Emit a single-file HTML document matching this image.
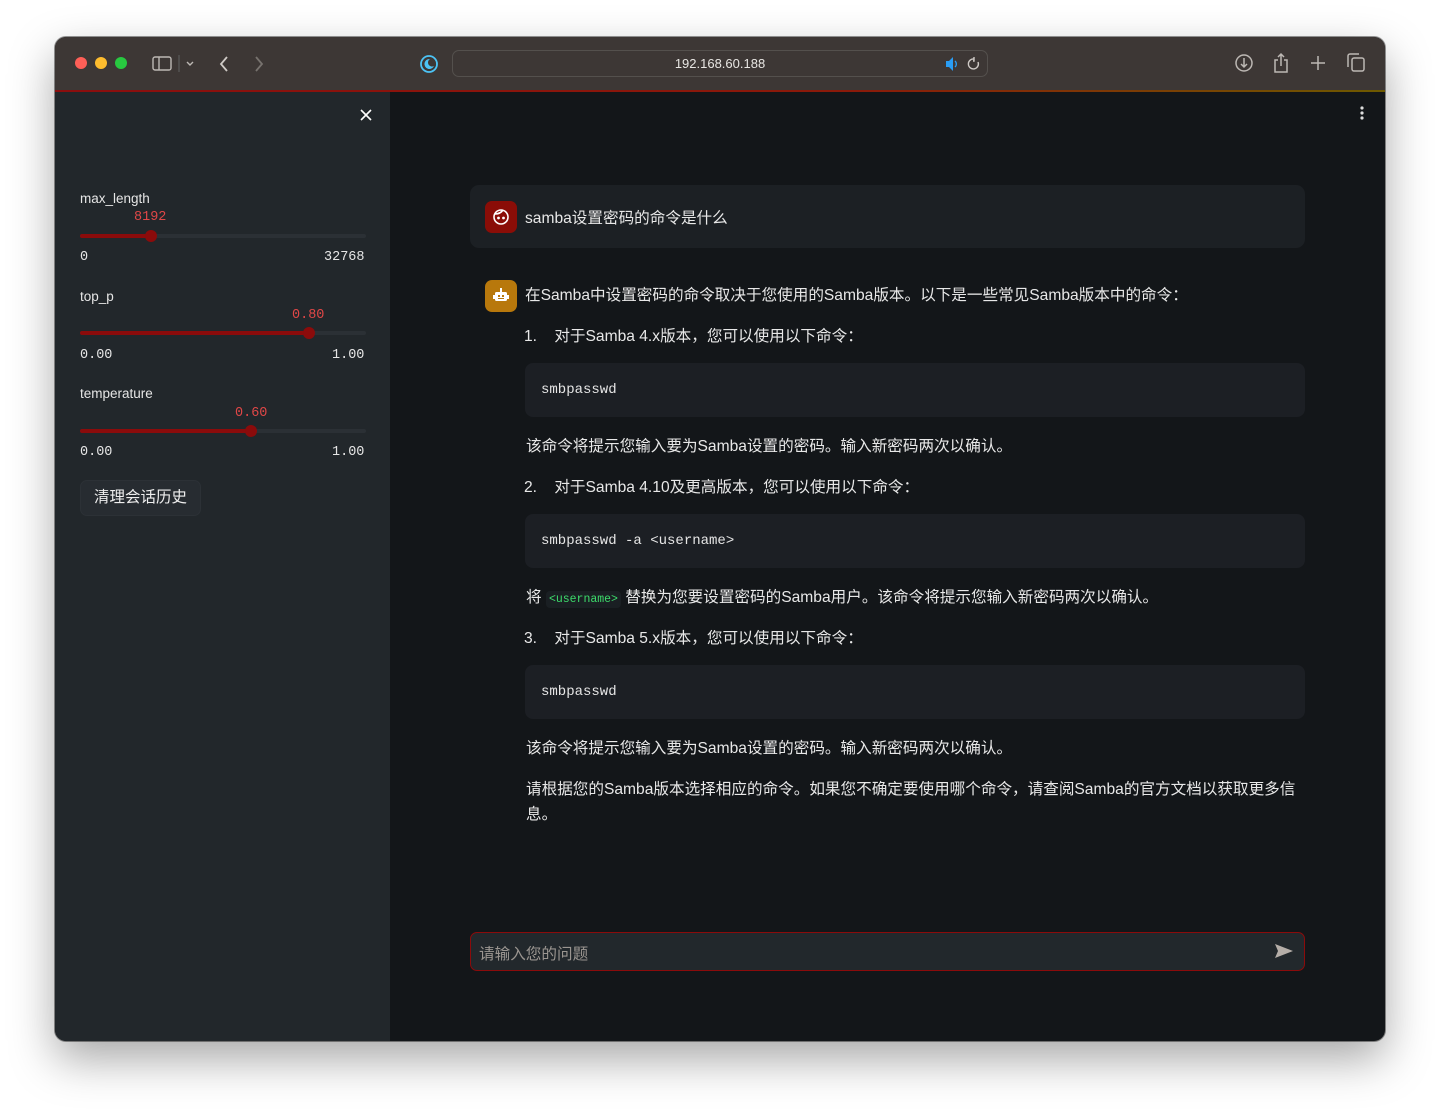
<!DOCTYPE html>
<html><head><meta charset="utf-8">
<style>
*{box-sizing:border-box;margin:0;padding:0}
body{width:1440px;height:1115px;background:#fff;font-family:"Liberation Sans","Noto Sans CJK SC",sans-serif;position:relative;overflow:hidden}
.win{position:absolute;left:55px;top:37px;width:1330px;height:1004px;border-radius:11px;overflow:hidden;background:#131619;box-shadow:0 18px 45px rgba(0,0,0,.35),0 0 0 1px rgba(0,0,0,.4)}
.bar{position:absolute;left:0;top:0;width:100%;height:53px;background:#3d3735}
.line{position:absolute;left:0;top:53px;width:100%;height:2px;background:linear-gradient(90deg,#8b0e0e,#8b1a0a 60%,#6e5a00)}
.dot{position:absolute;top:20px;width:12px;height:12px;border-radius:50%}
.url{position:absolute;left:397px;top:13px;width:536px;height:27px;border:1px solid #54504d;border-radius:7px;color:#e8e6e3;font-size:13px;text-align:center;line-height:25px}
.side{position:absolute;left:0;top:55px;width:335px;height:949px;background:#22272b}
.lbl{position:absolute;left:25px;color:#e6e6e6;font-size:13.5px}
.mono{font-family:"Liberation Mono","DejaVu Sans Mono",monospace}
.val{position:absolute;color:#e04747;font-size:13.5px}
.track{position:absolute;left:25px;width:286px;height:4px;border-radius:2px;background:#2b3035}
.fill{position:absolute;left:0;top:0;height:4px;border-radius:2px;background:#8b0b0b}
.knob{position:absolute;top:-4px;width:12px;height:12px;border-radius:50%;background:#8b0b0b;margin-left:-6px}
.mm{position:absolute;color:#e6e6e6;font-size:13.5px}
.btn{position:absolute;left:25px;top:388px;width:121px;height:36px;border-radius:7px;background:#272c31;border:1px solid #2c3136;color:#eee;font-size:15.5px;text-align:center;line-height:34px}
.main{color:#e8e8e8;font-size:15.6px}
.p{position:absolute;left:471px;white-space:nowrap}
.code{position:absolute;left:470px;width:780px;height:54px;background:#1c1f24;border-radius:8px;font-family:"Liberation Mono","DejaVu Sans Mono",monospace;font-size:14px;color:#e6e6e6;padding-left:16px;line-height:54px}
.av{position:absolute;left:430px;width:32px;height:32px;border-radius:7px}
</style></head><body>
<div class="win">
 <div class="bar">
  <div class="dot" style="left:20px;background:#fe5f57"></div>
  <div class="dot" style="left:40px;background:#febc2e"></div>
  <div class="dot" style="left:60px;background:#28c840"></div>
  <svg style="position:absolute;left:97px;top:18px" width="60" height="18" viewBox="0 0 60 18" fill="none" stroke="#bdb8b4" stroke-width="1.4"><rect x="1" y="2" width="18" height="13" rx="2"/><line x1="7" y1="2" x2="7" y2="15"/><line x1="27" y1="0" x2="27" y2="17" stroke="#555"/><path d="M35 7l3 3 3-3"/></svg>
  <svg style="position:absolute;left:162px;top:17px" width="50" height="20" viewBox="0 0 50 20" fill="none" stroke-width="1.8"><path d="M10 3l-6 7 6 7" stroke="#cfcac6"/><path d="M39 3l6 7-6 7" stroke="#77726e"/></svg>
  <svg style="position:absolute;left:364px;top:17px" width="20" height="20" viewBox="0 0 20 20" fill="none"><circle cx="10" cy="10" r="8" stroke="#4cc3f5" stroke-width="1.8"/><path d="M11 5a5 5 0 1 0 4 7a4 4 0 0 1-4-7z" fill="#4cc3f5"/></svg>
  <div class="url">192.168.60.188</div>
  <svg style="position:absolute;left:890px;top:19px" width="36" height="16" viewBox="0 0 36 16"><path d="M1 5h3l4-4v14l-4-4H1z" fill="#2a9df4"/><path d="M10 5a4 4 0 0 1 0 6" stroke="#2a9df4" fill="none" stroke-width="1.3"/><path d="M29 3a5 5 0 1 0 4 3" stroke="#cfcac6" fill="none" stroke-width="1.4"/><path d="M29 1v4h-1" stroke="#cfcac6" fill="none" stroke-width="1.4"/></svg>
  <svg style="position:absolute;left:1178px;top:15px" width="140" height="24" viewBox="0 0 140 24" fill="none" stroke="#bdb8b4" stroke-width="1.5"><circle cx="11" cy="11" r="8"/><path d="M11 6v9M8 12l3 3 3-3"/><path d="M45 8h-3v12h12V8h-3M48 14V2M45 5l3-3 3 3"/><path d="M85 4v14M78 11h14"/><rect x="119" y="6" width="12" height="13" rx="2"/><path d="M115 15V4a2 2 0 0 1 2-2h9"/></svg>
 </div>
 <div class="line"></div>
 <div class="side">
  <svg style="position:absolute;left:305px;top:17px" width="12" height="12" viewBox="0 0 12 12" stroke="#fff" stroke-width="1.6"><path d="M1 1l10 10M11 1L1 11"/></svg>
  <div class="lbl" style="top:99px">max_length</div>
  <div class="val mono" style="left:79px;top:118px">8192</div>
  <div class="track" style="top:142px"><div class="fill" style="width:71px"></div><div class="knob" style="left:71px"></div></div>
  <div class="mm mono" style="left:25px;top:158px">0</div>
  <div class="mm mono" style="left:269px;top:158px">32768</div>

  <div class="lbl" style="top:197px">top_p</div>
  <div class="val mono" style="left:237px;top:216px">0.80</div>
  <div class="track" style="top:239px"><div class="fill" style="width:229px"></div><div class="knob" style="left:229px"></div></div>
  <div class="mm mono" style="left:25px;top:256px">0.00</div>
  <div class="mm mono" style="left:277px;top:256px">1.00</div>

  <div class="lbl" style="top:294px">temperature</div>
  <div class="val mono" style="left:180px;top:314px">0.60</div>
  <div class="track" style="top:337px"><div class="fill" style="width:171px"></div><div class="knob" style="left:171px"></div></div>
  <div class="mm mono" style="left:25px;top:353px">0.00</div>
  <div class="mm mono" style="left:277px;top:353px">1.00</div>
  <div class="btn">清理会话历史</div>
 </div>
 <svg style="position:absolute;left:1304px;top:68px" width="6" height="16"><circle cx="3" cy="3" r="1.6" fill="#ddd"/><circle cx="3" cy="8" r="1.6" fill="#ddd"/><circle cx="3" cy="13" r="1.6" fill="#ddd"/></svg>
 <div class="main">
  <div style="position:absolute;left:415px;top:148px;width:835px;height:63px;background:#1c2024;border-radius:9px"></div>
  <div class="av" style="top:164px;background:#8a0d07"><svg width="32" height="32" viewBox="0 0 32 32" fill="none" stroke="#fff" stroke-width="1.6"><circle cx="16" cy="16" r="7"/><path d="M10 13c3 0 6-1 8-4"/><circle cx="13.5" cy="17" r=".6" fill="#fff"/><circle cx="18.5" cy="17" r=".6" fill="#fff"/></svg></div>
  <div class="p" style="left:470px;top:169px">samba设置密码的命令是什么</div>
  <div class="av" style="top:243px;background:#b8780c"><svg width="32" height="32" viewBox="0 0 32 32" fill="#fff"><rect x="10" y="12" width="12" height="9" rx="1.5"/><rect x="15" y="8" width="2" height="4"/><rect x="8" y="15" width="2" height="4"/><rect x="22" y="15" width="2" height="4"/><rect x="13" y="15" width="2" height="2" fill="#b8780c"/><rect x="17" y="15" width="2" height="2" fill="#b8780c"/><rect x="13" y="18" width="6" height="1" fill="#b8780c"/></svg></div>
  <div class="p" style="left:470px;top:246px">在Samba中设置密码的命令取决于您使用的Samba版本。以下是一些常见Samba版本中的命令：</div>
  <div class="p" style="left:469px;top:287px">1.&nbsp;&nbsp;&nbsp;&nbsp;对于Samba 4.x版本，您可以使用以下命令：</div>
  <div class="code" style="top:326px">smbpasswd</div>
  <div class="p" style="top:397px">该命令将提示您输入要为Samba设置的密码。输入新密码两次以确认。</div>
  <div class="p" style="left:469px;top:438px">2.&nbsp;&nbsp;&nbsp;&nbsp;对于Samba 4.10及更高版本，您可以使用以下命令：</div>
  <div class="code" style="top:477px">smbpasswd -a &lt;username&gt;</div>
  <div class="p" style="top:548px">将 <span style="font-family:'Liberation Mono',monospace;font-size:11.5px;color:#3ddc6b;background:#1a1f23;padding:2px 3px;border-radius:4px">&lt;username&gt;</span> 替换为您要设置密码的Samba用户。该命令将提示您输入新密码两次以确认。</div>
  <div class="p" style="left:469px;top:589px">3.&nbsp;&nbsp;&nbsp;&nbsp;对于Samba 5.x版本，您可以使用以下命令：</div>
  <div class="code" style="top:628px">smbpasswd</div>
  <div class="p" style="top:699px">该命令将提示您输入要为Samba设置的密码。输入新密码两次以确认。</div>
  <div class="p" style="top:740px">请根据您的Samba版本选择相应的命令。如果您不确定要使用哪个命令，请查阅Samba的官方文档以获取更多信</div>
  <div class="p" style="top:765px">息。</div>
  <div style="position:absolute;left:415px;top:895px;width:835px;height:39px;border:1px solid #8b0b0b;border-radius:7px;background:#22282c"></div>
  <div class="p" style="left:424px;top:905px;color:#9a9590">请输入您的问题</div>
  <svg style="position:absolute;left:1219px;top:906px" width="20" height="16" viewBox="0 0 20 16"><path d="M1 1l18 7-18 7 3-7z" fill="#b5aea8"/></svg>
 </div>
</div>
</body></html>
